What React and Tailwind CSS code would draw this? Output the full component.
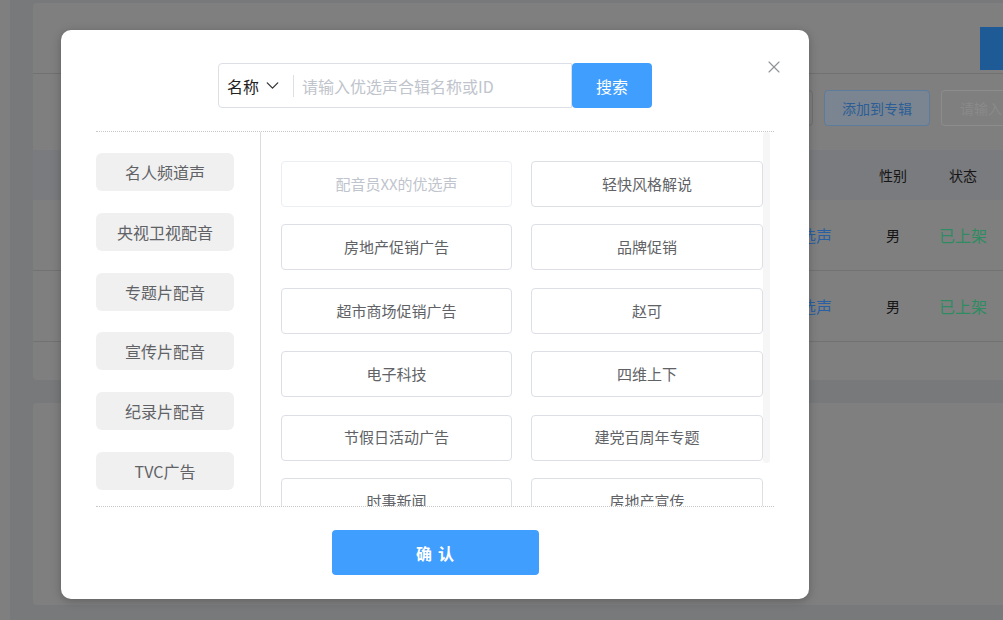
import { ChevronDown, X } from "lucide-react";

const sideTabs = ["名人频道声", "央视卫视配音", "专题片配音", "宣传片配音", "纪录片配音", "TVC广告"];

const albums = [
  { name: "配音员XX的优选声", disabled: true },
  { name: "轻快风格解说" },
  { name: "房地产促销广告" },
  { name: "品牌促销" },
  { name: "超市商场促销广告" },
  { name: "赵可" },
  { name: "电子科技" },
  { name: "四维上下" },
  { name: "节假日活动广告" },
  { name: "建党百周年专题" },
  { name: "时事新闻" },
  { name: "房地产宣传" },
];

const rows = [1, 2];

export default function App() {
  return (
    <div
      className="relative h-[620px] w-full overflow-hidden bg-[#78797b]"
      style={{ fontFamily: '"Noto Sans CJK SC", "Noto Sans", sans-serif' }}
    >
      {/* PAGE (dimmed behind the mask) */}
      <div className="flex h-full">
        <div className="w-[10px] h-full bg-[#7f7f7f]" />
        <div className="flex-1 flex flex-col gap-[23px] pl-[23px] pt-[3px] overflow-hidden">
          {/* card 1 */}
          <div className="h-[377px] bg-[#7f7f7f] rounded-l-[4px] flex flex-col">
            <div className="h-[71px] border-b border-[#717171] flex justify-end pt-[24px]">
              <div className="w-[23px] h-[43px] bg-[#1d5a96]" />
            </div>

            <div className="flex justify-end items-center gap-[11px] pt-[16px]">
              <div className="w-[110px] h-[36px] rounded-[4px] border border-[#717171]" />
              <div className="w-[106px] h-[36px] rounded-[4px] border border-[#5d7c9c] bg-[#7a8591] flex items-center justify-center text-[14px] text-[#2c5d95]">
                添加到专辑
              </div>
              <div className="w-[62px] h-[36px] rounded-l-[4px] border border-r-0 border-[#8c8c8c] flex items-center pl-[18px] text-[14px] text-[#8a8a8a] whitespace-nowrap overflow-hidden">
                请输入
              </div>
            </div>

            <div className="mt-[24px] h-[50px] bg-[#7a7b7e] flex justify-end items-center pr-[5px] text-[14px] text-[#151515]">
              <div className="w-[70px] text-center">性别</div>
              <div className="w-[70px] text-center">状态</div>
            </div>

            {rows.map((r) => (
              <div
                key={r}
                className="h-[71px] border-b border-[#727272] flex justify-end items-center pr-[5px] text-[16px]"
              >
                <div className="flex-1 text-right pr-[26px] text-[#2a5fa3] whitespace-nowrap">配音员XX的优选声</div>
                <div className="w-[70px] text-center text-[14px] text-[#141414]">男</div>
                <div className="w-[70px] text-center text-[#2f8c62]">已上架</div>
              </div>
            ))}
          </div>

          {/* card 2 */}
          <div className="h-[202px] bg-[#7f7f7f] rounded-l-[4px]" />
        </div>
      </div>

      {/* MODAL */}
      <div className="absolute left-[61px] top-[30px] w-[748px] h-[569px] bg-white rounded-[10px] shadow-[0_2px_10px_rgba(0,0,0,0.25)] flex flex-col px-[35px]">
        <button className="absolute right-[25px] top-[27px] text-[#909399]">
          <X size={20} strokeWidth={1.4} />
        </button>

        {/* search */}
        <div className="flex justify-center mt-[33px]">
          <div className="w-[354px] h-[45px] border border-[#dcdfe6] rounded-l-[4px] flex items-center">
            <div className="flex items-center pl-[8px] pr-[10px] text-[16px] text-[#222]">
              名称
              <ChevronDown size={21} strokeWidth={1.5} className="ml-[3px] text-[#333]" />
            </div>
            <div className="w-px h-[22px] bg-[#dcdfe6]" />
            <div className="pl-[8px] text-[16px] text-[#c0c4cc] whitespace-nowrap">请输入优选声合辑名称或ID</div>
          </div>
          <button className="w-[80px] h-[45px] bg-[#409eff] rounded-[4px] text-white text-[16px]">搜索</button>
        </div>

        {/* body */}
        <div className="mt-[23px] border-t border-dotted border-[#c8c8c8] border-b flex h-[376px] overflow-hidden">
          <div className="w-[165px] flex-none border-r border-[#dcdcdc] pt-[21px] flex flex-col gap-[21.8px]">
            {sideTabs.map((t) => (
              <div
                key={t}
                className="w-[138px] h-[38px] bg-[#f0f0f0] rounded-[6px] flex items-center justify-center text-[16px] text-[#606266]"
              >
                {t}
              </div>
            ))}
          </div>

          <div className="flex-1 flex">
            <div className="flex-1 pl-[20px] pt-[29px] overflow-hidden">
              <div className="grid grid-cols-[231px_232px] gap-x-[19px] gap-y-[17.4px]">
                {albums.map((a) => (
                  <div
                    key={a.name}
                    className={
                      a.disabled
                        ? "h-[46px] rounded-[4px] border border-[#ebeef5] flex items-center justify-center text-[15px] text-[#c0c4cc]"
                        : "h-[46px] rounded-[4px] border border-[#dcdfe6] flex items-center justify-center text-[15px] text-[#606266]"
                    }
                  >
                    {a.name}
                  </div>
                ))}
              </div>
            </div>
            <div className="w-[7px] h-[331px] bg-[#f6f6f6] rounded-[3px] mr-[4px]" />
          </div>
        </div>

        {/* footer */}
        <div className="flex justify-center mt-[23px]">
          <button className="w-[207px] h-[45px] bg-[#409eff] rounded-[4px] text-white text-[16px] font-bold tracking-[6px] pl-[6px]">
            确认
          </button>
        </div>
      </div>
    </div>
  );
}
